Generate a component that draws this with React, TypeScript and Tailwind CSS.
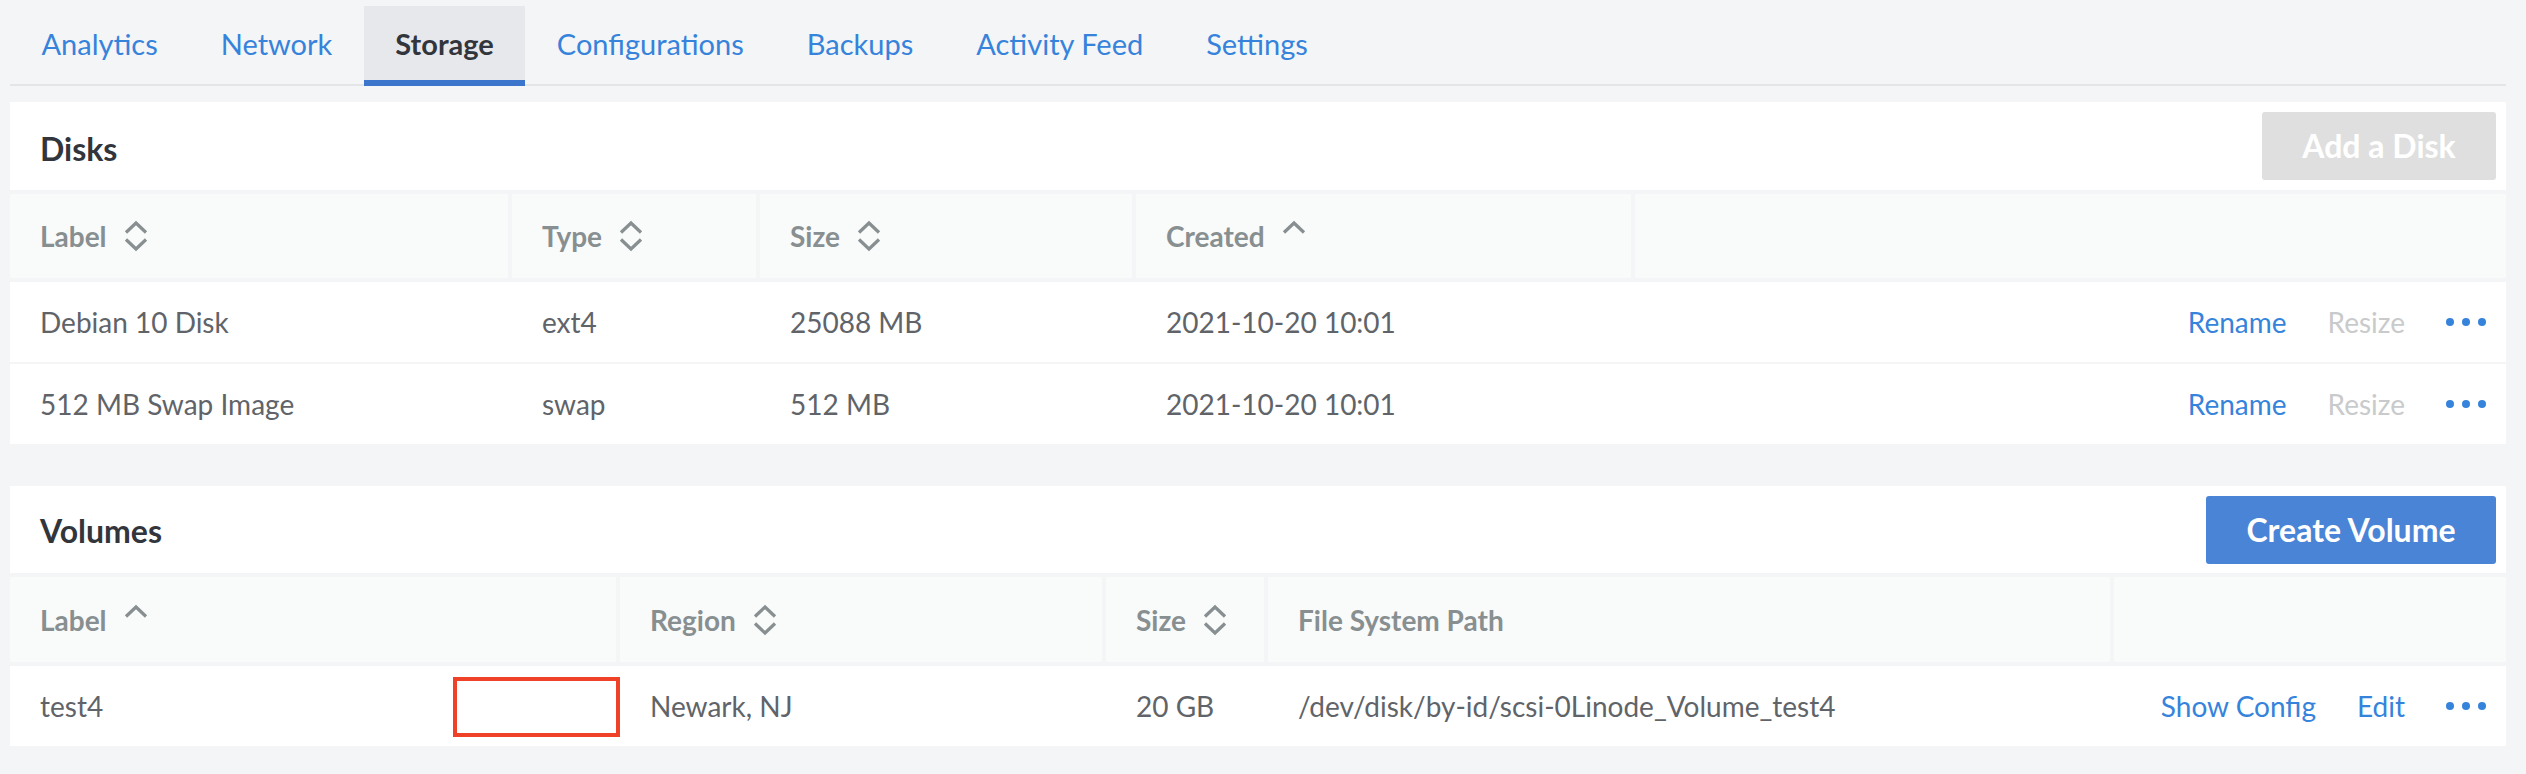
import React from "react";

const BLUE = "text-[#3683dc]";

function SortIcon({ dir }: { dir: "both" | "up" }) {
  return (
    <svg width="24" height="32" viewBox="0 0 24 32" className="ml-[17px] shrink-0" fill="none" stroke="#888f91" strokeWidth="3.2" strokeLinecap="butt" strokeLinejoin="miter">
      <path d="M2 12.5 L12 3 L22 12.5" />
      {dir === "both" && <path d="M2 19.5 L12 29 L22 19.5" />}
    </svg>
  );
}

function Dots() {
  return (
    <div className="flex items-center gap-[8px]">
      <span className="w-[8px] h-[8px] rounded-full bg-[#3683dc]" />
      <span className="w-[8px] h-[8px] rounded-full bg-[#3683dc]" />
      <span className="w-[8px] h-[8px] rounded-full bg-[#3683dc]" />
    </div>
  );
}

function HeadCell({ label, sort }: { label?: string; sort?: "both" | "up" }) {
  return (
    <div className="bg-[#f9fafa] flex items-center pl-[30px] h-full">
      {label && <span className="text-[28px] font-bold text-[#888f91] leading-none">{label}</span>}
      {sort && <SortIcon dir={sort} />}
    </div>
  );
}

function Cell({ children }: { children?: React.ReactNode }) {
  return <div className="flex items-center pl-[30px] text-[28px] text-[#606469] whitespace-nowrap">{children}</div>;
}

const tabs = ["Analytics", "Network", "Storage", "Configurations", "Backups", "Activity Feed", "Settings"];

export default function App() {
  const diskCols = "grid grid-cols-[498px_244px_372px_495px_1fr] gap-x-[4px]";
  const volCols = "grid grid-cols-[606px_482px_158px_842px_1fr] gap-x-[4px]";
  return (
    <div className="w-[2526px] h-[774px] bg-[#f4f5f6] [font-family:Lato,'Open_Sans',sans-serif] pl-[10px] pr-[20px] pt-[6px] overflow-hidden">
      {/* Tabs */}
      <div className="flex border-b-2 border-[#e3e5e8]">
        {tabs.map((t) => {
          const sel = t === "Storage";
          return (
            <div
              key={t}
              className={
                "h-[80px] -mb-[2px] px-[31.5px] flex items-center border-b-[6px] text-[29px] leading-none " +
                (sel ? "bg-[#e7e8ec] border-[#3b76cc] font-bold text-[#32363c]" : "border-transparent text-[#3683dc]")
              }
            >
              {t}
            </div>
          );
        })}
      </div>

      {/* Disks */}
      <div className="mt-[16px]">
        <div className="h-[88px] bg-white flex items-center justify-between pl-[30px] pr-[10px]">
          <h2 className="text-[32px] font-bold text-[#32363c] leading-none pt-[5px]">Disks</h2>
          <button className="h-[68px] w-[234px] rounded-[3px] bg-[#dfdfdf] text-white text-[32px] font-bold">Add a Disk</button>
        </div>
        <div className={diskCols + " mt-[4px] h-[84px]"}>
          <HeadCell label="Label" sort="both" />
          <HeadCell label="Type" sort="both" />
          <HeadCell label="Size" sort="both" />
          <HeadCell label="Created" sort="up" />
          <HeadCell />
        </div>
        {[
          ["Debian 10 Disk", "ext4", "25088 MB", "2021-10-20 10:01"],
          ["512 MB Swap Image", "swap", "512 MB", "2021-10-20 10:01"],
        ].map((r, i) => (
          <div key={i} className={diskCols + " bg-white h-[80px] " + (i === 0 ? "mt-[4px]" : "mt-[2px]")}>
            <Cell>{r[0]}</Cell>
            <Cell>{r[1]}</Cell>
            <Cell>{r[2]}</Cell>
            <Cell>{r[3]}</Cell>
            <div className="flex items-center justify-end gap-[41px] pr-[20px] text-[28px]">
              <span className={BLUE}>Rename</span>
              <span className="text-[#c9cacb]">Resize</span>
              <Dots />
            </div>
          </div>
        ))}
      </div>

      {/* Volumes */}
      <div className="mt-[42px]">
        <div className="h-[87px] bg-white flex items-center justify-between pl-[30px] pr-[10px]">
          <h2 className="text-[32px] font-bold text-[#32363c] leading-none pt-[3px]">Volumes</h2>
          <button className="h-[68px] w-[290px] rounded-[3px] bg-[#4a84d6] text-white text-[32px] font-bold">Create Volume</button>
        </div>
        <div className={volCols + " mt-[4px] h-[85px]"}>
          <HeadCell label="Label" sort="up" />
          <HeadCell label="Region" sort="both" />
          <HeadCell label="Size" sort="both" />
          <HeadCell label="File System Path" />
          <HeadCell />
        </div>
        <div className={volCols + " relative bg-white h-[80px] mt-[4px]"}>
          <Cell>test4</Cell>
          <Cell>Newark, NJ</Cell>
          <Cell>20 GB</Cell>
          <Cell>/dev/disk/by-id/scsi-0Linode_Volume_test4</Cell>
          <div className="flex items-center justify-end gap-[41px] pr-[20px] text-[28px]">
            <span className={BLUE}>Show Config</span>
            <span className={BLUE}>Edit</span>
            <Dots />
          </div>
          <div className="absolute left-[443px] top-[11px] w-[167px] h-[60px] border-[4px] border-[#ee4128]" />
        </div>
      </div>
    </div>
  );
}
